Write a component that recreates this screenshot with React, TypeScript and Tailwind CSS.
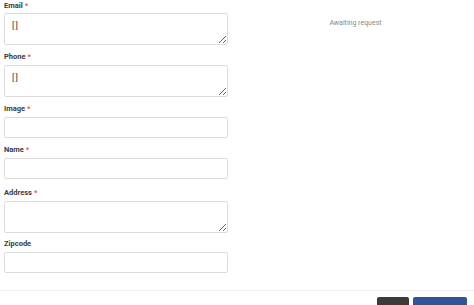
import React from "react";

const Label = ({ text, req }: { text: string; req?: boolean }) => (
  <div className="text-[7.5px] leading-[10px] font-bold text-[#3a3a3a] h-[10px]">
    {text}
    {req && <span className="text-[#e05a55] ml-[2px]">*</span>}
  </div>
);

const Area = ({ value }: { value?: string }) => (
  <textarea
    defaultValue={value}
    spellCheck={false}
    className="block w-[224px] h-[32px] border border-[#dcdcdc] rounded-[2px] pl-[7px] pt-[6px] text-[9px] leading-[11px] tracking-[1px] text-[#333] outline-none resize-y"
    style={{ fontFamily: "Roboto, sans-serif" }}
  />
);

const Input = () => (
  <input className="block w-[224px] h-[21px] border border-[#dcdcdc] rounded-[2px] px-[6px] text-[8px] outline-none" />
);

export default function App() {
  return (
    <div className="w-[474px] h-[305px] overflow-hidden bg-white" style={{ fontFamily: "Roboto, sans-serif" }}>
      <div className="flex h-[290px]">
        <div className="w-[236px] pl-[4px] pt-[1px] flex flex-col">
          <Label text="Email" req />
          <div className="mt-[2px]"><Area value="[]" /></div>
          <div className="mt-[7px]"><Label text="Phone" req /></div>
          <div className="mt-[3px]"><Area value="[]" /></div>
          <div className="mt-[7px]"><Label text="Image" req /></div>
          <div className="mt-[3px]"><Input /></div>
          <div className="mt-[7px]"><Label text="Name" req /></div>
          <div className="mt-[3px]"><Input /></div>
          <div className="mt-[9px]"><Label text="Address" req /></div>
          <div className="mt-[3px]"><Area /></div>
          <div className="mt-[6px]"><Label text="Zipcode" /></div>
          <div className="mt-[3px]"><Input /></div>
        </div>
        <div className="flex-1 flex justify-center pt-[18px]">
          <div className="text-[7px] leading-[10px] text-[#888] pl-[1px]">Awaiting request</div>
        </div>
      </div>
      <div className="border-t border-[#f0f0f0] flex justify-end gap-[4px] pr-[7px] pt-[6px]">
        <div className="w-[32px] h-[20px] bg-[#3b3b3b] rounded-t-[2px]" />
        <div className="w-[54px] h-[20px] bg-[#2f5597] rounded-t-[2px]" />
      </div>
    </div>
  );
}
